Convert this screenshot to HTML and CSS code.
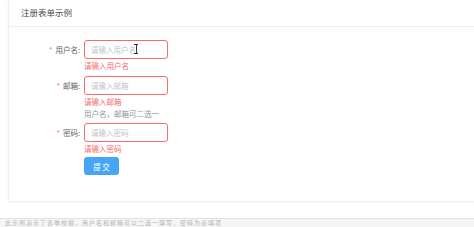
FILE: index.html
```html
<!DOCTYPE html>
<html lang="zh-CN">
<head>
    <meta charset="UTF-8">
    <title>注册表单示例</title>
    <link rel="stylesheet" href="styles.css">
</head>
<body>
    <div class="card">
        <div class="card-header">注册表单示例</div>

        <form class="card-body" id="register-form">
            <div class="form-item">
                <label class="form-label" for="username"><span class="star">*</span>用户名:</label>
                <div class="form-content">
                    <div class="input-wrap">
                        <input class="form-input is-error" id="username" type="text" placeholder="请输入用户名">
                        <span class="text-cursor"></span>
                    </div>
                    <div class="error-text">请输入用户名</div>
                </div>
            </div>

            <div class="form-item">
                <label class="form-label" for="email"><span class="star">*</span>邮箱:</label>
                <div class="form-content">
                    <input class="form-input is-error" id="email" type="text" placeholder="请输入邮箱">
                    <div class="error-text">请输入邮箱</div>
                    <div class="hint-text">用户名，邮箱可二选一</div>
                </div>
            </div>

            <div class="form-item form-item-tight">
                <label class="form-label" for="password"><span class="star">*</span>密码:</label>
                <div class="form-content">
                    <input class="form-input is-error" id="password" type="password" placeholder="请输入密码">
                    <div class="error-text">请输入密码</div>
                </div>
            </div>

            <div class="form-item">
                <div class="form-label"></div>
                <div class="form-content">
                    <button type="submit" class="submit-btn">提 交</button>
                </div>
            </div>
        </form>
    </div>

    <div class="footer">
        <span>此示例演示了表单校验，用户名和邮箱可以二选一填写，密码为必填项</span>
    </div>
</body>
</html>
```

FILE: styles.css
```css
body {
    margin: 0;
    padding: 0;
    background-color: #fff;
    font-family: "Noto Sans CJK SC", "Liberation Sans", sans-serif;
    overflow: hidden;
}

.card {
    margin-left: 8px;
    height: 202px;
    border: 1px solid #ebeef5;
    border-top: none;
    border-right: none;
    box-sizing: border-box;
    box-shadow: 0 1px 3px rgba(0, 0, 0, 0.04);
}

.card-header {
    height: 26px;
    line-height: 24px;
    padding-left: 12px;
    font-size: 8.5px;
    color: #4a4a4a;
    border-bottom: 1px solid #ebeef5;
}

.card-body {
    padding: 13px 0 0 13px;
}

.form-item {
    display: flex;
    margin-bottom: 4px;
}

.form-item-tight {
    margin-bottom: 2px;
}

.form-label {
    width: 62px;
    height: 19px;
    line-height: 19px;
    padding-right: 4px;
    box-sizing: border-box;
    text-align: right;
    font-size: 7.5px;
    color: #606266;
}

.star {
    color: #f56c6c;
    margin-right: 3px;
}

.form-content {
    display: flex;
    flex-direction: column;
}

.input-wrap {
    position: relative;
}

.form-input {
    display: block;
    width: 84px;
    height: 19px;
    padding: 0 6px;
    box-sizing: border-box;
    border: 1px solid #dcdfe6;
    border-radius: 3px;
    font-size: 7.5px;
    font-family: inherit;
    color: #606266;
    outline: none;
}

.form-input::placeholder {
    color: #c0c4cc;
}

.form-input.is-error {
    border-color: #f56c6c;
}

.text-cursor {
    position: absolute;
    left: 50px;
    top: 4px;
    width: 4px;
    height: 10px;
    border-top: 1px solid #333;
    border-bottom: 1px solid #333;
    box-sizing: border-box;
}

.text-cursor::after {
    content: "";
    position: absolute;
    left: 1.5px;
    top: 0;
    width: 1px;
    height: 8px;
    background-color: #333;
}

.error-text {
    height: 13px;
    line-height: 13px;
    font-size: 7.5px;
    color: #f56c6c;
}

.hint-text {
    height: 11px;
    line-height: 11px;
    font-size: 7.5px;
    color: #909399;
}

.submit-btn {
    width: 35px;
    height: 18px;
    padding: 0;
    border: none;
    border-radius: 3px;
    background-color: #46a6f5;
    color: #fff;
    font-size: 7.5px;
    font-family: inherit;
    cursor: pointer;
}

.footer {
    margin-top: 16px;
    height: 8px;
    padding: 0 0 0 5px;
    background-color: #f5f5f5;
    border-top: 1px solid #e2e2e2;
    font-size: 6px;
    line-height: 8px;
    color: #b4b4b4;
    letter-spacing: 1px;
}
```
